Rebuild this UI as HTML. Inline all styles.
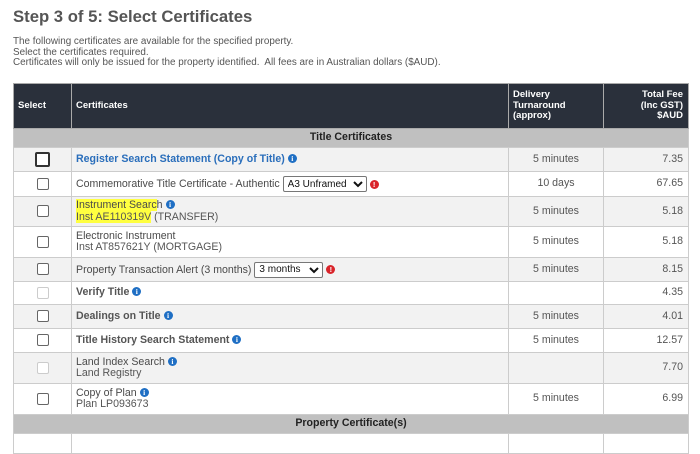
<!DOCTYPE html>
<html><head><style>
body{margin:0;background:#fff;font-family:"Liberation Sans",Arial,sans-serif;color:#555;width:700px;height:437px;overflow:hidden}
h1{position:absolute;left:13px;top:7px;margin:0;font-size:16.7px;font-weight:bold;color:#555}
.intro{position:absolute;left:13px;top:37px;font-size:9.9px;line-height:10.5px;color:#555}
table{position:absolute;left:13px;top:83px;width:675px;border-collapse:collapse;font-size:10.6px;line-height:11.5px;table-layout:fixed}
td,th{border:1px solid #ccc;padding:0 4px;vertical-align:middle}
th{background:#2a303b;color:#fff;text-align:left;font-size:9.5px;line-height:10.5px;border-color:#aaa;height:44px}
.sec td{background:#c0c0c0;text-align:center;font-weight:bold;color:#222;height:18px}
tr.o td{background:#f2f2f2}
.c{text-align:center}
.r{text-align:right;padding-right:5px}
.b{color:#4a4a4a}
.bb{font-weight:bold;color:#555}
a{color:#2a6ebb;font-weight:bold;text-decoration:none}
.i{display:inline-block;width:9px;height:9px;border-radius:50%;background:#1f6fc4;color:#fff;font-size:7.5px;line-height:9px;text-align:center;font-weight:bold;font-family:"Liberation Serif",serif;vertical-align:1px}
.e{display:inline-block;width:9px;height:9px;border-radius:50%;background:#d9242a;color:#fff;font-size:7.5px;line-height:9px;text-align:center;font-weight:bold;vertical-align:0px}
.cb{display:inline-block;width:10px;height:10px;border:1px solid #666;border-radius:2px;background:#fff;vertical-align:middle}
.cb.d{border-color:#ccc}
.cb.f{width:11px;height:11px;border:2px solid #333}
select{font-family:"Liberation Sans",sans-serif;font-size:10px;height:16px;border:1px solid #777;border-radius:2px;background:#fff;color:#111;padding:0;vertical-align:middle}
.hl{background:#ffff40}
</style></head><body>
<h1>Step 3 of 5: Select Certificates</h1>
<div class="intro">The following certificates are available for the specified property.<br>Select the certificates required.<br>Certificates will only be issued for the property identified.&nbsp; All fees are in Australian dollars ($AUD).</div>
<table>
<colgroup><col style="width:58px"><col style="width:437px"><col style="width:95px"><col style="width:85px"></colgroup>
<tr><th>Select</th><th>Certificates</th><th>Delivery<br>Turnaround<br>(approx)</th><th class="r">Total Fee<br>(Inc GST)<br>$AUD</th></tr>
<tr class="sec"><td colspan="4">Title Certificates</td></tr>
<tr class="o" style="height:24px"><td class="c"><span class="cb f"></span></td><td><a>Register Search Statement (Copy of Title)</a> <span class="i">i</span></td><td class="c">5 minutes</td><td class="r">7.35</td></tr>
<tr style="height:25px"><td class="c"><span class="cb"></span></td><td><span class="b">Commemorative Title Certificate - Authentic</span> <select style="width:84px"><option>A3 Unframed</option></select> <span class="e">!</span></td><td class="c">10 days</td><td class="r">67.65</td></tr>
<tr class="o" style="height:30px"><td class="c"><span class="cb"></span></td><td><span class="b"><span class="hl">Instrument Searc</span>h</span> <span class="i">i</span><br><span class="hl">Inst AE110319V</span> (TRANSFER)</td><td class="c">5 minutes</td><td class="r">5.18</td></tr>
<tr style="height:31px"><td class="c"><span class="cb"></span></td><td><span class="b">Electronic Instrument</span><br>Inst AT857621Y (MORTGAGE)</td><td class="c">5 minutes</td><td class="r">5.18</td></tr>
<tr class="o" style="height:24px"><td class="c"><span class="cb"></span></td><td><span class="b">Property Transaction Alert (3 months)</span> <select style="width:69px"><option>3 months</option></select> <span class="e">!</span></td><td class="c">5 minutes</td><td class="r">8.15</td></tr>
<tr style="height:23px"><td class="c"><span class="cb d"></span></td><td><span class="bb">Verify Title</span> <span class="i">i</span></td><td class="c"></td><td class="r">4.35</td></tr>
<tr class="o" style="height:24px"><td class="c"><span class="cb"></span></td><td><span class="bb">Dealings on Title</span> <span class="i">i</span></td><td class="c">5 minutes</td><td class="r">4.01</td></tr>
<tr style="height:24px"><td class="c"><span class="cb"></span></td><td><span class="bb">Title History Search Statement</span> <span class="i">i</span></td><td class="c">5 minutes</td><td class="r">12.57</td></tr>
<tr class="o" style="height:31px"><td class="c"><span class="cb d"></span></td><td><span class="b">Land Index Search</span> <span class="i">i</span><br>Land Registry</td><td class="c"></td><td class="r">7.70</td></tr>
<tr style="height:31px"><td class="c"><span class="cb"></span></td><td><span class="b">Copy of Plan</span> <span class="i">i</span><br>Plan LP093673</td><td class="c">5 minutes</td><td class="r">6.99</td></tr>
<tr class="sec"><td colspan="4">Property Certificate(s)</td></tr>
<tr style="height:20px"><td></td><td></td><td></td><td></td></tr>
</table>
</body></html>
